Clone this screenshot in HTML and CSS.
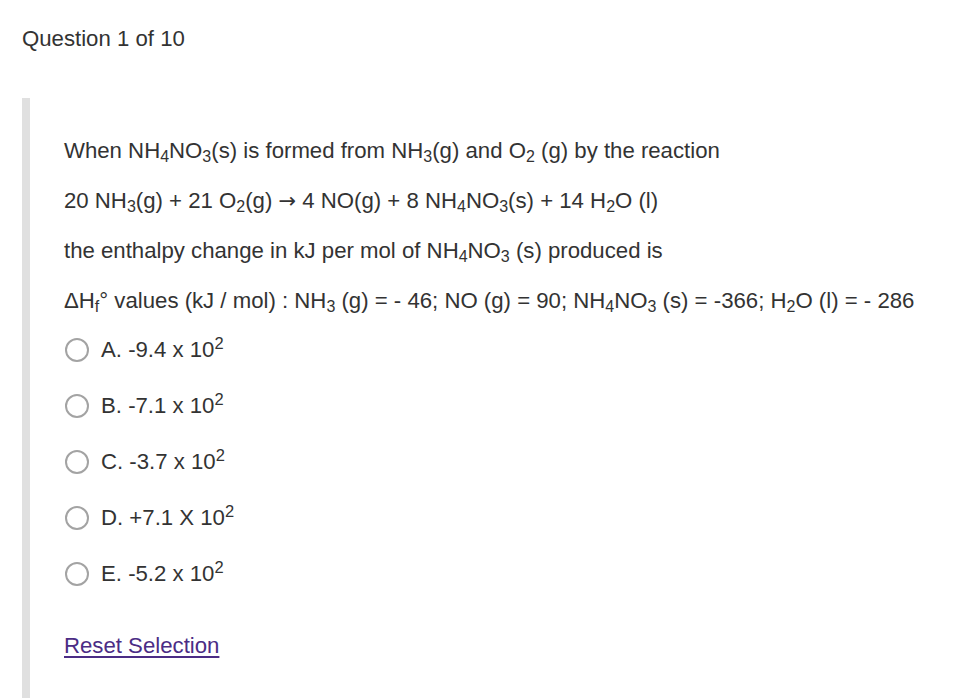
FILE: index.html
```html
<!DOCTYPE html>
<html>
<head>
<meta charset="utf-8">
<link rel="stylesheet" href="styles.css">
</head>
<body>
<div class="header">Question 1 of 10</div>
<div class="question">
  <p class="line">When NH<sub>4</sub>NO<sub>3</sub>(s) is formed from NH<sub>3</sub>(g) and O<sub>2</sub> (g) by the reaction</p>
  <p class="line">20 NH<sub>3</sub>(g) + 21 O<sub>2</sub>(g) <span class="arrow">&rarr;</span> 4 NO(g) + 8 NH<sub>4</sub>NO<sub>3</sub>(s) + 14 H<sub>2</sub>O (l)</p>
  <p class="line">the enthalpy change in kJ per mol of NH<sub>4</sub>NO<sub>3</sub> (s) produced is</p>
  <p class="line last">&Delta;H<sub>f</sub>&deg; values (kJ / mol) : NH<sub>3</sub> (g) = - 46; NO (g) = 90; NH<sub>4</sub>NO<sub>3</sub> (s) = -366; H<sub>2</sub>O (l) = - 286</p>
  <div class="options">
    <label class="option"><span class="radio"></span><span class="text">A. -9.4 x 10<sup>2</sup></span></label>
    <label class="option"><span class="radio"></span><span class="text">B. -7.1 x 10<sup>2</sup></span></label>
    <label class="option"><span class="radio"></span><span class="text">C. -3.7 x 10<sup>2</sup></span></label>
    <label class="option"><span class="radio"></span><span class="text">D. +7.1 X 10<sup>2</sup></span></label>
    <label class="option"><span class="radio"></span><span class="text">E. -5.2 x 10<sup>2</sup></span></label>
  </div>
  <a class="reset" href="#">Reset Selection</a>
</div>
</body>
</html>
```
FILE: styles.css
```css
html, body {
  margin: 0;
  padding: 0;
  background: #fff;
}
body {
  font-family: "Liberation Sans", Arial, sans-serif;
  font-size: 22.2px;
  color: #333;
}
.header {
  padding: 24px 0 0 22px;
  line-height: 30px;
}
.question {
  box-sizing: border-box;
  margin: 44px 0 0 22px;
  border-left: 8px solid #e0e0e0;
  padding: 38px 0 0 34px;
  height: 600px;
}
.line {
  margin: 0 0 20px 0;
  line-height: 30px;
  white-space: nowrap;
}
.line.last {
  margin-bottom: 0;
}
sub {
  font-size: 16px;
  line-height: 0;
  vertical-align: -4px;
}
sup {
  font-size: 16.5px;
  line-height: 0;
  vertical-align: 8px;
}
.arrow {
  font-family: "DejaVu Sans", sans-serif;
  font-size: 21px;
  line-height: 0;
}
.options {
  margin-top: 6px;
  display: flex;
  flex-direction: column;
}
.option {
  display: flex;
  align-items: center;
  height: 56px;
  gap: 12px;
  margin-left: 1px;
}
.radio {
  width: 20px;
  height: 20px;
  border: 2px solid #a3a3a3;
  border-radius: 50%;
  box-sizing: content-box;
  flex: none;
}
.text {
  line-height: 30px;
}
.reset {
  display: inline-block;
  margin-top: 29px;
  line-height: 30px;
  color: #4b2c85;
  text-decoration: underline;
  text-underline-offset: 3px;
}
```
